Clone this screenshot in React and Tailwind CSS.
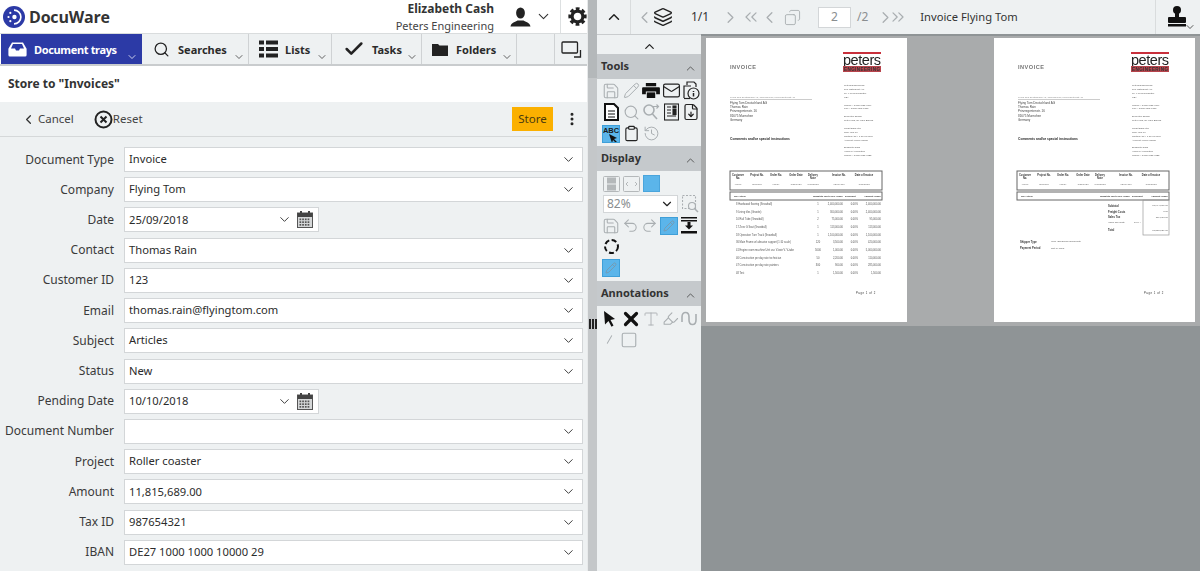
import React from "react";
import { ChevronDown, ChevronUp, ChevronLeft, ChevronRight, ChevronsLeft, ChevronsRight, Search, Check, Layers, Copy, Save, Pencil, Mail, History, FileDown, Clipboard, Undo2, Redo2, X, Type, Highlighter, Minus, Square, MoreVertical } from "lucide-react";

const FIELDS = [
  ["Document Type", "Invoice"], ["Company", "Flying Tom"], ["Date", "25/09/2018", true], ["Contact", "Thomas Rain"],
  ["Customer ID", "123"], ["Email", "thomas.rain@flyingtom.com"], ["Subject", "Articles"], ["Status", "New"],
  ["Pending Date", "10/10/2018", true], ["Document Number", ""], ["Project", "Roller coaster"], ["Amount", "11,815,689.00"],
  ["Tax ID", "987654321"], ["IBAN", "DE27 1000 1000 10000 29"],
];

function Logo() {
  return (
    <svg width="22" height="22" viewBox="0 0 24 24">
      <circle cx="12" cy="12" r="12" fill="#2c3aa6" />
      <path d="M12 4.500a7.500 7.500 0 0 1 0 15" fill="none" stroke="#fff" strokeWidth="1.800" />
      <circle cx="12.500" cy="12" r="2.400" fill="#fff" />
      <circle cx="8" cy="7.500" r="1.200" fill="#fff" />
      <circle cx="8" cy="16.500" r="1.200" fill="#fff" />
      <circle cx="6" cy="12" r="1.200" fill="#fff" />
    </svg>
  );
}
function Gear() {
  return (
    <svg width="19" height="19" viewBox="0 0 20 20" fill="none" stroke="#222">
      <circle cx="10" cy="10" r="5.700" strokeWidth="3.400" />
      <circle cx="10" cy="10" r="8.100" strokeWidth="3.200" strokeDasharray="3.800 2.560" transform="rotate(-14 10 10)" />
    </svg>
  );
}
function UserIcon() {
  return (
    <svg width="21" height="20" viewBox="0 0 21 20" fill="#222">
      <ellipse cx="10.500" cy="6" rx="4.400" ry="5.600" />
      <path d="M0.500 19.500c.6-4 5-4.400 7-6h6c2 1.600 6.400 2 7 6z" />
    </svg>
  );
}
function TrayIcon() {
  return (
    <svg width="19" height="15" viewBox="0 0 19 15" fill="#fff">
      <path d="M4 .5h11l3.600 6.300v6.200a1.500 1.500 0 0 1-1.500 1.500H1.900A1.500 1.500 0 0 1 .4 13V6.800zM3 6.500h4l1 2h3l1-2h4L14 2H5z" fillRule="evenodd" />
    </svg>
  );
}
function ListIcon() {
  return (
    <svg width="19" height="18" viewBox="0 0 19 18" fill="#222">
      <rect x="0" y="0.500" width="5" height="4" /><rect x="7" y="0.500" width="12" height="4" />
      <rect x="0" y="7" width="5" height="4" /><rect x="7" y="7" width="12" height="4" />
      <rect x="0" y="13.500" width="5" height="4" /><rect x="7" y="13.500" width="12" height="4" />
    </svg>
  );
}
function FolderIcon() {
  return (
    <svg width="16" height="13" viewBox="0 0 16 13" fill="#222"><path d="M0 1h6l1.500 1.500H16V13H0z" /></svg>
  );
}
function WindowIcon() {
  return (
    <svg width="21" height="17" viewBox="0 0 21 17" fill="none" stroke="#222" strokeWidth="1.300">
      <rect x="1" y="1" width="15.500" height="11" rx="1" />
      <path d="M19.500 9v7H13" />
    </svg>
  );
}
function Calendar() {
  return (
    <svg width="16" height="17" viewBox="0 0 16 17">
      <rect x="0.500" y="2" width="15" height="14.500" fill="#d5d7d8" stroke="#555" />
      <rect x="0.500" y="2" width="15" height="4" fill="#444" />
      <rect x="3" y="0" width="2" height="3" fill="#444" /><rect x="11" y="0" width="2" height="3" fill="#444" />
      <g fill="#555">
        {[7.500, 10.300, 13].map((y) => [2.500, 5.200, 7.900, 10.600].map((x) => <rect key={x + "-" + y} x={x} y={y} width="1.700" height="1.700" />))}
      </g>
    </svg>
  );
}
function Stamp() {
  return (
    <svg width="20" height="21" viewBox="0 0 20 21" fill="#111">
      <circle cx="10" cy="4" r="4" />
      <rect x="8" y="7" width="4" height="5" />
      <rect x="1" y="11" width="18" height="6" rx="1" />
      <rect x="1" y="18" width="18" height="2.500" />
    </svg>
  );
}
function PrinterSolid() {
  return (
    <svg width="18" height="15" viewBox="0 0 19 16" fill="#111">
      <rect x="4" y="0" width="11" height="3.500" />
      <path d="M0 5.500a1 1 0 0 1 1-1h17a1 1 0 0 1 1 1V12h-4V9H4v3H0z" />
      <rect x="5" y="10" width="9" height="6" />
    </svg>
  );
}
function FileInfo() {
  return (
    <svg width="18" height="19" viewBox="0 0 18 19" fill="none" stroke="#222" strokeWidth="1.200">
      <path d="M5 4V1h7l2 2v3M2 17V5h7" />
      <path d="M2 17.500h6" />
      <circle cx="11.500" cy="12.500" r="5.500" fill="#eef1f2" />
      <path d="M11.500 10v1M11.500 12v3.500" strokeWidth="1.500" />
    </svg>
  );
}
function AbcIcon() {
  return (
    <div className="w-[18px] h-[18px] bg-[#5bb5ea] border border-[#3f9fd8] flex items-start justify-center overflow-hidden relative">
      <span className="text-[7.500px] font-bold leading-[10px] text-[#1a1a1a] [font-family:'Liberation_Sans',sans-serif]">ABC</span>
      <svg className="absolute left-[6px] top-[8px]" width="9" height="9" viewBox="0 0 9 9" fill="#111"><path d="M0 0l8 4-3 1 3 3-1 1-3-3-1 3z" /></svg>
    </div>
  );
}
function FileLines() {
  return (
    <svg width="15" height="18" viewBox="0 0 15 18" fill="#fff" stroke="#111" strokeWidth="2">
      <path d="M1 1h9l4 4v12H1z" />
      <path d="M4 8h7M4 11h7M4 14h7" strokeWidth="1.200" />
    </svg>
  );
}
function InfoDoc() {
  return (
    <svg width="15" height="18" viewBox="0 0 15 18" fill="none" stroke="#222" strokeWidth="1.100">
      <rect x="0.500" y="1" width="14" height="16" />
      <path d="M3 4h4M3 7h4M3 10h4M3 13h9" />
      <rect x="9" y="3" width="3" height="2" fill="#222" /><rect x="9" y="6.500" width="3" height="5" fill="#222" />
    </svg>
  );
}
function SearchGear() {
  return (
    <svg width="18" height="18" viewBox="0 0 18 18" fill="none" stroke="#a9aeb1" strokeWidth="1.600">
      <circle cx="7" cy="7" r="5" />
      <path d="M10.500 11l4.500 5" />
      <path d="M11 3.500h5M14.500 1.500l2 2-2 2" strokeWidth="1.200" />
    </svg>
  );
}
function FitIcon({ kind }) {
  if (kind === "page") {
    return (
      <svg width="17" height="16" viewBox="0 0 17 16" fill="none" stroke="#b4b8ba" strokeWidth="1">
        <rect x="0.500" y="0.500" width="16" height="15" rx="1" />
        <rect x="4.500" y="2" width="8" height="12" fill="#b4b8ba" />
        <path d="M2 8h13" stroke="#eef1f2" />
      </svg>
    );
  }
  if (kind === "width") {
    return (
      <svg width="17" height="16" viewBox="0 0 17 16" fill="none" stroke="#b4b8ba" strokeWidth="1">
        <rect x="0.500" y="0.500" width="16" height="15" rx="1" />
        <path d="M5 6L3 8l2 2M12 6l2 2-2 2" />
      </svg>
    );
  }
  return <div className="w-[17px] h-[17px] bg-[#5bb5ea] border border-[#4aa5dc]" />;
}
function ZoomRect() {
  return (
    <svg width="17" height="18" viewBox="0 0 17 18" fill="none" stroke="#a9aeb1" strokeWidth="1.100">
      <rect x="0.500" y="0.500" width="13" height="13" strokeDasharray="2 1.500" />
      <circle cx="10" cy="11" r="3.500" fill="#eef1f2" />
      <path d="M12.500 13.500l3.500 3.500" strokeWidth="1.500" />
    </svg>
  );
}
function ActiveBlue({ children }) {
  return <div className="w-[18px] h-[18px] bg-[#5bb5ea] border border-[#3f9fd8] flex items-center justify-center">{children}</div>;
}
function PageDown() {
  return (
    <svg width="18" height="17" viewBox="0 0 18 17" fill="#111">
      <rect x="1" y="0" width="16" height="1.500" /><rect x="1" y="3" width="16" height="1.500" />
      <path d="M7.500 5h3v3.500H13L9 12.500 5 8.500h2.500z" />
      <rect x="1" y="14" width="16" height="2.500" />
    </svg>
  );
}
function Rotator() {
  return (
    <svg width="17" height="17" viewBox="0 0 17 17" fill="none" stroke="#111" strokeWidth="2" strokeDasharray="5 2.500">
      <circle cx="8.500" cy="8.500" r="6.500" />
    </svg>
  );
}
function Arrow() {
  return <svg width="13" height="16" viewBox="0 0 13 16" fill="#111"><path d="M1 0l11 8-4.500 1 3 5.500-2 1.200-3-5.700L2 13.500z" /></svg>;
}
function Wave() {
  return <svg width="17" height="15" viewBox="0 0 17 15" fill="none" stroke="#a9aeb1" strokeWidth="1.600"><path d="M1 11V6c0-6 7-6 7 0v3c0 6 7 6 7 0V3" /></svg>;
}

function NavTab({ w, active, icon, label, pl, gap, track = "" }) {
  return (
    <div className={"relative h-full flex items-center shrink-0 border-r whitespace-nowrap " + w + " " + pl + " " + gap + " " + (active ? "bg-[#2c3aa6] text-white border-[#2c3aa6]" : "text-[#2b2b2b] border-[#cfd2d4]")}>
      {icon}
      <span className={"text-[11px] font-bold pt-[2px] " + track}>{label}</span>
      <ChevronDown size={12} strokeWidth={1.500} className={"absolute right-[3px] bottom-[1px] " + (active ? "text-white" : "text-[#333]")} />
    </div>
  );
}

function Field({ label, value, date }) {
  return (
    <div className="flex items-center h-[25px] shrink-0">
      <label className="w-[114px] text-right text-[12px] text-[#3a3a3a] whitespace-nowrap shrink-0">{label}</label>
      <div className={"ml-[10px] h-[25px] bg-white border border-[#d3d6d8] flex items-center justify-between pl-[4px] " + (date ? "w-[195px] pr-[5px]" : "w-[459px] pr-[5px]")}>
        <span className="text-[11.200px] text-[#2b2b2b]">{value}</span>
        {date ? (
          <div className="flex items-center gap-[5px]">
            <ChevronDown size={15} strokeWidth={1.500} className="text-[#333]" />
            <Calendar />
          </div>
        ) : (
          <ChevronDown size={15} strokeWidth={1.500} className="text-[#333] mr-[1px]" />
        )}
      </div>
    </div>
  );
}

function PanelHead({ title }) {
  return (
    <div className="h-[25px] shrink-0 bg-[#c5c9cc] flex items-center justify-between pl-[4px] pr-[4px]">
      <span className="text-[11px] font-bold text-[#333]">{title}</span>
      <ChevronUp size={13} strokeWidth={1.500} className="text-[#444] mt-[3px]" />
    </div>
  );
}
function Slot({ children, w = "w-[20px]" }) {
  return <div className={w + " h-[21px] flex items-center justify-center shrink-0"}>{children}</div>;
}

const G = "#a9aeb1";
const ROWS = [
  ["8  Hardwood flooring (Snowball)", "1", "2,400,000.00", "0.00%", "2,400,000.00"],
  ["9  Lining tiles (Granite)", "1", "300,000.00", "0.00%", "2,400,000.00"],
  ["10  Rail Tube (Snowball)", "2", "75,000.00", "0.00%", "95,000.00"],
  ["17  Zero G Seat (Snowball)", "1", "113,000.00", "0.00%", "113,000.00"],
  ["18  Operation Turn Track (Snowball)", "1", "1,100,000.00", "0.00%", "1,100,000.00"],
  ["36  Main Frame w/ abrasive support (1:10 scale)", "120", "3,500.00", "0.00%", "420,000.00"],
  ["41  Engine room machine Unit var. V-twin V. V-tube", "5000", "1,000.00", "0.00%", "5,000,000.00"],
  ["46  Construction per day rate technician", "50", "2,200.00", "0.00%", "110,000.00"],
  ["47  Construction per day rate painters", "300", "900.00", "0.00%", "285,000.00"],
  ["48  Test", "1", "1,500.00", "0.00%", "1,500.00"],
];
const HEADS = [["Customer", 32], ["Project No.", 51], ["Order No.", 70], ["Order Date", 90], ["Delivery", 107], ["Invoice No.", 133], ["Date of Invoice", 158]];
const VALS = [["49547", 32], ["2000000", 51], ["98614", 70], ["1/21/1980", 90], ["6/30/2018", 107], ["98614100", 133], ["1/31/2018", 158]];

function InvoicePage({ second }) {
  const dx = second ? -1 : 0;
  return (
    <svg width="201" height="284" viewBox="0 0 201 284" className="bg-white shrink-0 [font-family:'Liberation_Sans',sans-serif]">
      <g className="blur-[0.400px]">
        <text x="24" y="31" fontSize="5.600" fontWeight="700" letterSpacing="0.500" fill="#777">INVOICE</text>
        <rect x="137" y="14" width="38" height="2" fill="#c8303c" />
        <text x="137" y="26.500" fontSize="14.500" fontWeight="400" textLength="38" fill="#222">peters</text>
        <rect x="137" y="28" width="38" height="6" fill="#b8444c" />
        <text x="138" y="32.800" fontSize="4.600" fontWeight="700" textLength="36" fill="#333">ENGINEERING</text>
        <g fontSize="2.400" fill="#555">
          {["Peters Engineering", "100 Waterfront Ave", "NY 9 NYS Rochester", "USA", "", "Mobile:  +1(650) 555-0199", "Fax:  +1(650) 555-0188", "", "Executive Board:", "Peter King, Dr. Paul Barnes", "", "Credit Bank Ltd.", "New York NY", "Routing ABA: 1 50 01 0010", "Account: 43997 03005", "", "Elizabeth Cash", "Head of Accounting", "Mobile:  +1(650) 555-0123"].map((t, i) => (
            <text key={i} x="138" y={48 + i * 3.900}>{t}</text>
          ))}
        </g>
        <text x="24" y="60" fontSize="2.300" fill="#888">Flying Tom Deutschland AG, Thomas Rain, Prinzregentenstr. 16</text>
        <rect x={24} y={61} width="82" height="0.500" fill="#999" />
        <g fontSize="3" fill="#444">
          {["Flying Tom Deutschland AG", "Thomas Rain", "Prinzregentenstr. 16", "81675 Muenchen", "Germany"].map((t, i) => <text key={i} x="24" y={66 + i * 4.200}>{t}</text>)}
        </g>
        <text x="24" y="102" fontSize="3.300" fontWeight="700" fill="#222">Comments and/or special instructions</text>
        <rect x={24 + dx} y="133" width="152" height="19" fill="none" stroke="#666" strokeWidth="1" />
        <rect x={24 + dx} y="154" width="152" height="8" fill="none" stroke="#666" strokeWidth="1" />
        <g fontSize="2.600" fontWeight="700" fill="#333" textAnchor="middle">
          {HEADS.map(([t, x]) => <text key={t} x={x + dx} y="137.500">{t}</text>)}
          <text x={32 + dx} y="141">No.</text>
          <text x={107 + dx} y="141">Note</text>
        </g>
        <g fontSize="2.500" fill="#666" textAnchor="middle">
          {VALS.map(([t, x]) => <text key={t} x={x + dx} y="146.500">{t}</text>)}
        </g>
        <g fontSize="2.500" fontWeight="700" fill="#333">
          <text x={28 + dx} y="159">NR  Article</text>
          <text x={107 + dx} y="159">Quantity</text>
          <text x={137 + dx} y="159" textAnchor="end">Unit Price (USD)</text>
          <text x={139 + dx} y="159">Discount</text>
          <text x={175 + dx} y="159" textAnchor="end">Amount (USD)</text>
        </g>
        {!second && (
          <g fontSize="2.600" fill="#555">
            {ROWS.map((r, i) => {
              const y = 167 + i * 7.650;
              return (
                <g key={r[0]}>
                  <text x="30" y={y}>{r[0]}</text>
                  <text x="112" y={y} textAnchor="middle">{r[1]}</text>
                  <text x="137" y={y} textAnchor="end">{r[2]}</text>
                  <text x="152" y={y} textAnchor="end">{r[3]}</text>
                  <text x="175" y={y} textAnchor="end">{r[4]}</text>
                </g>
              );
            })}
          </g>
        )}
        {second && (
          <g>
            <rect x="149" y="162" width="26" height="35" fill="none" stroke="#999" strokeWidth="0.700" />
            <g fontSize="2.700" fontWeight="700" fill="#333">
              <text x="114" y="168.500">Subtotal</text><text x="114" y="174.500">Freight Costs</text><text x="114" y="180">Sales Tax</text><text x="114" y="193">Total</text>
              <text x="26" y="204.500">Shipper Type</text><text x="26" y="211">Payment Period</text>
            </g>
            <g fontSize="2.500" fill="#555">
              <text x="114" y="184.500">Value Tax Rate</text><text x="140" y="184.500">19% )</text>
              <text x="174" y="168" textAnchor="end">11,944,000.00</text><text x="174" y="174" textAnchor="end">0.00</text><text x="174" y="179.500" textAnchor="end">119,660.00</text><text x="174" y="193" textAnchor="end">11,815,689.00</text>
              <text x="57" y="204">Wire (advanced document)</text><text x="57" y="210.500">Net 14 days</text>
            </g>
          </g>
        )}
        <text x="150" y="256" fontSize="2.800" fill="#333" letterSpacing="0.500">Page  1  of  2</text>
      </g>
    </svg>
  );
}

export default function App() {
  return (
    <div className="w-[1200px] h-[571px] overflow-hidden flex bg-[#eef1f2] text-[#2b2b2b] [font-family:'Noto_Sans',sans-serif]">
      {/* Left */}
      <div className="w-[587px] shrink-0 flex flex-col h-full">
        <div className="h-[33px] bg-white flex items-center shrink-0">
          <div className="ml-[3px] flex"><Logo /></div>
          <span className="ml-[4px] text-[16px] font-bold text-[#333] [font-family:'Open_Sans',sans-serif] tracking-[-0.200px]">DocuWare</span>
          <div className="ml-auto text-right mr-[16px] leading-[17px]">
            <div className="text-[12px] font-bold text-[#333]">Elizabeth Cash</div>
            <div className="text-[11px] text-[#444]">Peters Engineering</div>
          </div>
          <UserIcon />
          <ChevronDown size={17} strokeWidth={1.500} className="ml-[4px] text-[#333]" />
          <div className="w-px h-full bg-[#dde0e1] ml-[8px]" />
          <div className="ml-[7px] flex"><Gear /></div>
        </div>
        <div className="h-[33px] bg-[#eef1f2] border-b-2 border-[#c9ccce] flex items-center shrink-0 border-t border-t-[#d9dcdd]">
          <div className="w-px h-full bg-white shrink-0" />
          <NavTab w="w-[141px]" pl="pl-[7px]" gap="gap-[7px]" active track="tracking-[-0.350px]" icon={<TrayIcon />} label="Document trays" />
          <NavTab w="w-[107px]" pl="pl-[11px]" gap="gap-[8px]" icon={<Search size={17} strokeWidth={1.800} className="text-[#222]" />} label="Searches" />
          <NavTab w="w-[83px]" pl="pl-[10px]" gap="gap-[7px]" icon={<ListIcon />} label="Lists" />
          <NavTab w="w-[90px]" pl="pl-[11px]" gap="gap-[7px]" icon={<Check size={22} strokeWidth={2.800} className="text-[#222]" />} label="Tasks" />
          <NavTab w="w-[95px]" pl="pl-[10px]" gap="gap-[8px]" icon={<FolderIcon />} label="Folders" />
          <div className="w-[38px] h-full border-r border-[#cfd2d4] shrink-0" />
          <div className="flex-1 flex justify-center"><WindowIcon /></div>
        </div>
        <div className="h-[36px] bg-white flex items-center pl-[8px] shrink-0">
          <span className="text-[12px] font-bold text-[#333]">Store to "Invoices"</span>
        </div>
        <div className="h-[35px] bg-[#eef1f2] border-b border-[#d5d8d9] flex items-center pl-[21px] shrink-0">
          <ChevronLeft size={15} strokeWidth={2} className="text-[#333]" />
          <span className="ml-[2px] text-[11.500px] text-[#444]">Cancel</span>
          <svg className="ml-[20px]" width="19" height="19" viewBox="0 0 19 19" fill="none" stroke="#222" strokeWidth="2">
            <circle cx="9.500" cy="9.500" r="8" />
            <path d="M6.500 6.500l6 6M12.500 6.500l-6 6" />
          </svg>
          <span className="text-[11.500px] text-[#444]">Reset</span>
          <div className="ml-auto w-[41px] h-[24px] bg-[#fbb000] flex items-center justify-center text-[11.500px] text-[#4a3a10] mr-[9px]">Store</div>
          <MoreVertical size={16} strokeWidth={2.500} className="text-[#222] mr-[7px] ml-[2px]" />
        </div>
        <div className="flex flex-col gap-[5.230px] pt-[10px] overflow-hidden">
          {FIELDS.map(([l, v, d]) => <Field key={l} label={l} value={v} date={d} />)}
        </div>
      </div>

      {/* Splitter */}
      <div className="w-[10px] shrink-0 h-full bg-[#c4c7c9] relative border-l border-[#e8eaeb]">
        <div className="h-[78px] bg-[#b4b8ba]" />
        <div className="absolute left-[1px] top-[319px] flex gap-[1px]">
          <div className="w-[2px] h-[10px] bg-[#222]" /><div className="w-[2px] h-[10px] bg-[#222]" /><div className="w-[2px] h-[10px] bg-[#222]" />
        </div>
      </div>

      {/* Right */}
      <div className="flex-1 flex flex-col h-full min-w-0">
        <div className="h-[34px] bg-[#eef1f2] flex items-center shrink-0 text-[#a9aeb1]">
          <div className="w-[34px] h-full flex items-center justify-center border-r border-[#d9dcdd] shrink-0">
            <ChevronUp size={18} strokeWidth={2} className="text-[#222]" />
          </div>
          <ChevronLeft size={19} strokeWidth={1.600} className="ml-[4px]" />
          <Layers size={20} strokeWidth={1.700} className="text-[#222] ml-[-1px]" />
          <span className="ml-[18px] w-[34px] text-[12px] text-[#333]">1/1</span>
          <ChevronRight size={19} strokeWidth={1.600} className="ml-[-4px]" />
          <ChevronsLeft size={20} strokeWidth={1.500} className="ml-[1px]" />
          <ChevronLeft size={19} strokeWidth={1.600} className="ml-[-1px]" />
          <Copy size={17} strokeWidth={1.300} className="ml-[5px] -scale-x-100" />
          <div className="ml-[17px] w-[33px] h-[21px] bg-white border border-[#d3d6d8] flex items-center justify-center text-[12px] text-[#8a8e90]">2</div>
          <span className="ml-[6px] text-[12px] text-[#8a8e90]">/2</span>
          <ChevronRight size={19} strokeWidth={1.600} className="ml-[8px]" />
          <ChevronsRight size={20} strokeWidth={1.500} className="ml-[-7px]" />
          <span className="ml-[12px] text-[11.200px] text-[#333]">Invoice Flying Tom</span>
          <div className="ml-auto w-[45px] h-full border-l border-[#d9dcdd] relative flex items-center justify-center shrink-0">
            <div className="mr-[3px] mb-[1px] flex"><Stamp /></div>
            <ChevronDown size={12} strokeWidth={1.600} className="absolute right-[4px] bottom-[1px] text-[#333]" />
          </div>
        </div>
        <div className="flex flex-1 min-h-0">
          <div className="w-[104px] shrink-0 flex flex-col bg-[#eef1f2] border-t border-[#c9ccce]">
            <div className="h-[19px] shrink-0 flex items-center justify-center pt-[3px]">
              <ChevronUp size={15} strokeWidth={2} className="text-[#222]" />
            </div>
            <PanelHead title="Tools" />
            <div className="grid grid-cols-[repeat(5,20px)] auto-rows-[21.500px] pl-[4px] pt-[1px] h-[67px] shrink-0 content-start">
              <Slot><Save size={18} strokeWidth={1.400} color={G} /></Slot>
              <Slot><Pencil size={17} strokeWidth={1.400} color={G} /></Slot>
              <Slot><PrinterSolid /></Slot>
              <Slot><Mail size={19} strokeWidth={1.500} color="#222" /></Slot>
              <Slot><FileInfo /></Slot>
              <Slot><FileLines /></Slot>
              <Slot><Search size={17} strokeWidth={1.600} color={G} /></Slot>
              <Slot><SearchGear /></Slot>
              <Slot><InfoDoc /></Slot>
              <Slot><FileDown size={18} strokeWidth={1.600} color="#222" /></Slot>
              <Slot><AbcIcon /></Slot>
              <Slot><Clipboard size={17} strokeWidth={1.600} color="#222" /></Slot>
              <Slot><History size={17} strokeWidth={1.400} color={G} /></Slot>
            </div>
            <PanelHead title="Display" />
            <div className="pl-[4px] pt-[2px] h-[110px] shrink-0 flex flex-col">
              <div className="flex">
                <Slot><FitIcon kind="page" /></Slot>
                <Slot><FitIcon kind="width" /></Slot>
                <Slot><FitIcon kind="fit" /></Slot>
              </div>
              <div className="flex items-center mt-[1px]">
                <div className="w-[75px] h-[18px] ml-[2px] bg-white border border-[#d3d6d8] flex items-center justify-between px-[3px] text-[12px] text-[#8a8e90]">
                  82%
                  <ChevronDown size={14} strokeWidth={2} className="text-[#222]" />
                </div>
                <div className="ml-[4px] flex"><ZoomRect /></div>
              </div>
              <div className="flex mt-[2px]">
                <Slot w="w-[20px]"><Save size={18} strokeWidth={1.400} color={G} /></Slot>
                <Slot w="w-[19px]"><Undo2 size={17} strokeWidth={1.500} color={G} /></Slot>
                <Slot w="w-[19px]"><Redo2 size={17} strokeWidth={1.500} color={G} /></Slot>
                <Slot><ActiveBlue><Pencil size={12} strokeWidth={1.500} color="#7d93a2" /></ActiveBlue></Slot>
                <Slot><PageDown /></Slot>
              </div>
              <div className="flex">
                <Slot><Rotator /></Slot>
              </div>
              <div className="flex">
                <Slot><ActiveBlue><Pencil size={12} strokeWidth={1.500} color="#7d93a2" /></ActiveBlue></Slot>
              </div>
            </div>
            <PanelHead title="Annotations" />
            <div className="flex flex-wrap pl-[2px] pt-[2px] content-start">
              <Slot><Arrow /></Slot>
              <Slot w="w-[23px]"><X size={22} strokeWidth={3.500} color="#111" /></Slot>
              <Slot w="w-[18px]"><Type size={18} strokeWidth={1.200} color={G} /></Slot>
              <Slot w="w-[20px]"><Highlighter size={17} strokeWidth={1.500} color={G} /></Slot>
              <Slot w="w-[19px]"><Wave /></Slot>
              <div className="w-full h-0" />
              <Slot><Minus size={15} strokeWidth={1.500} color={G} className="-rotate-60" /></Slot>
              <Slot><Square size={18} strokeWidth={1.500} color={G} /></Slot>
            </div>
          </div>
          <div className="flex-1 bg-[#8f9496] border-t-2 border-[#8f9496] min-w-0">
            <div className="h-[290px] bg-[#a9abac] flex gap-[87px] pl-[5px] pt-[2px]">
              <InvoicePage />
              <InvoicePage second />
            </div>
          </div>
        </div>
      </div>
    </div>
  );
}
